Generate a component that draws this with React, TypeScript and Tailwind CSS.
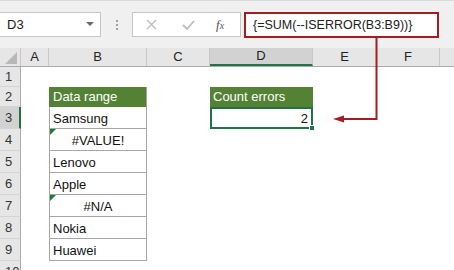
import React from 'react';

// column widths in px, after the row header (A..F, then G fills the rest)
const cols = [
  { key: 'A', w: 'w-[28px]' },
  { key: 'B', w: 'w-[98px]' },
  { key: 'C', w: 'w-[63px]' },
  { key: 'D', w: 'w-[103px]' },
  { key: 'E', w: 'w-[64px]' },
  { key: 'F', w: 'w-[63px]' },
];

const dataRows = [
  { n: 3, text: 'Samsung', err: false },
  { n: 4, text: '#VALUE!', err: true },
  { n: 5, text: 'Lenovo', err: false },
  { n: 6, text: 'Apple', err: false },
  { n: 7, text: '#N/A', err: true },
  { n: 8, text: 'Nokia', err: false },
  { n: 9, text: 'Huawei', err: false },
];

function ErrorFlag() {
  return (
    <svg className="absolute left-0 top-0" width="6" height="6" viewBox="0 0 6 6">
      <polygon points="0,0 6,0 0,6" fill="#1d7a2e" />
    </svg>
  );
}

function RowHead({ n, active, h }: { n: number; active?: boolean; h: string }) {
  return (
    <div
      className={`${h} w-[21px] shrink-0 flex items-center pl-[5px] border-b border-[#d4d4d4] ${
        active ? 'bg-[#d2d2d2] border-r-2 border-r-[#217346]' : 'bg-[#e6e6e6] border-r border-r-[#ababab]'
      } text-[13px] text-[#333]`}
    >
      {n}
    </div>
  );
}

export default function App() {
  return (
    <div
      className="relative w-[454px] h-[270px] overflow-hidden bg-white"
      style={{ fontFamily: '"Liberation Sans", Arial, sans-serif' }}
    >
      {/* formula bar */}
      <div className="h-[48px] bg-[#f0f0f0] border-t border-[#dadada] flex items-start pt-[11px]">
        <div className="w-[101px] h-[25px] bg-white border border-l-0 border-[#c6c6c6] flex items-center justify-between pl-[7px] pr-[6px] text-[13px] text-[#222]">
          <span>D3</span>
          <svg width="8" height="5" viewBox="0 0 8 5">
            <polygon points="0,0 8,0 4,4" fill="#6b6b6b" />
          </svg>
        </div>
        <div className="w-[31px] h-[25px] flex flex-col items-center justify-center gap-[2px]">
          <span className="w-[2px] h-[2px] bg-[#a0a0a0]" />
          <span className="w-[2px] h-[2px] bg-[#a0a0a0]" />
          <span className="w-[2px] h-[2px] bg-[#a0a0a0]" />
        </div>
        <div className="w-[109px] h-[25px] bg-white border border-[#c6c6c6] flex items-center">
          <svg className="ml-[13px]" width="11" height="11" viewBox="0 0 11 11">
            <path d="M1 1 L10 10 M10 1 L1 10" stroke="#bdbdbd" strokeWidth="1.4" />
          </svg>
          <svg className="ml-[25px]" width="13" height="10" viewBox="0 0 13 10">
            <path d="M1 5 L5 9 L12 1" stroke="#bdbdbd" strokeWidth="1.8" fill="none" />
          </svg>
          <span className="ml-[21px] text-[13px] italic text-[#555]" style={{ fontFamily: '"Liberation Serif", serif' }}>
            f<span className="text-[10px]">x</span>
          </span>
        </div>
        <div className="ml-[3px] w-[195px] h-[26px] bg-white border-2 border-[#a31e22] flex items-center pl-[7px] text-[12.5px] text-[#222]">
          {'{=SUM(--ISERROR(B3:B9))}'}
        </div>
      </div>

      {/* column headers */}
      <div className="h-[19px] flex bg-[#e6e6e6] border-b border-[#ababab]">
        <div className="w-[21px] shrink-0 relative border-r border-[#c8c8c8]">
          <svg className="absolute right-[3px] bottom-[2px]" width="12" height="12" viewBox="0 0 12 12">
            <polygon points="12,0 12,12 0,12" fill="#b8b8b8" />
          </svg>
        </div>
        {cols.map(c => (
          <div
            key={c.key}
            className={`${c.w} shrink-0 flex items-center justify-center text-[13px] text-[#222] border-r border-[#c8c8c8] ${
              c.key === 'D' ? 'bg-[#d2d2d2] border-b-2 border-b-[#217346] text-[#1e6b41]' : ''
            }`}
          >
            {c.key}
          </div>
        ))}
        <div className="flex-1" />
      </div>

      {/* row 1 */}
      <div className="flex h-[20px]">
        <RowHead n={1} h="h-[20px]" />
      </div>

      {/* row 2 */}
      <div className="flex h-[20px]">
        <RowHead n={2} h="h-[20px]" />
        <div className="w-[28px] shrink-0" />
        <div className="w-[98px] shrink-0 bg-[#548235] flex items-center pl-[4px] text-[13px] text-white border-r border-[#a6a6a6]">
          Data range
        </div>
        <div className="w-[63px] shrink-0" />
        <div className="w-[103px] shrink-0 bg-[#548235] flex items-center pl-[3px] text-[13px] text-white">
          Count errors
        </div>
      </div>

      {/* rows 3-9 */}
      {dataRows.map(r => (
        <div key={r.n} className="flex h-[22px]">
          <RowHead n={r.n} active={r.n === 3} h="h-[22px]" />
          <div className="w-[28px] shrink-0" />
          <div
            className={`relative w-[98px] shrink-0 border-l border-r border-b border-[#a6a6a6] flex items-center pt-[2px] text-[13px] text-[#111] ${
              r.err ? 'justify-center' : 'pl-[3px]'
            }`}
          >
            {r.err && <ErrorFlag />}
            {r.text}
          </div>
          <div className="w-[63px] shrink-0" />
          {r.n === 3 && (
            <div className="relative w-[103px] shrink-0 border-2 border-[#217346] flex items-center justify-end pr-[3px] pt-[2px] text-[13px] text-[#111]">
              2
              <span className="absolute right-[-4px] bottom-[-4px] w-[6px] h-[6px] bg-[#217346] border border-white" />
            </div>
          )}
        </div>
      ))}

      {/* row 10 */}
      <div className="flex h-[22px]">
        <RowHead n={10} h="h-[22px]" />
      </div>

      {/* red callout from formula to D3 */}
      <svg className="absolute left-0 top-0 pointer-events-none" width="454" height="270">
        <path d="M376.5 37 L376.5 119 L342 119" stroke="#a31e22" strokeWidth="2" fill="none" />
        <polygon points="333,119 344,115.5 344,122.5" fill="#a31e22" />
      </svg>
    </div>
  );
}
